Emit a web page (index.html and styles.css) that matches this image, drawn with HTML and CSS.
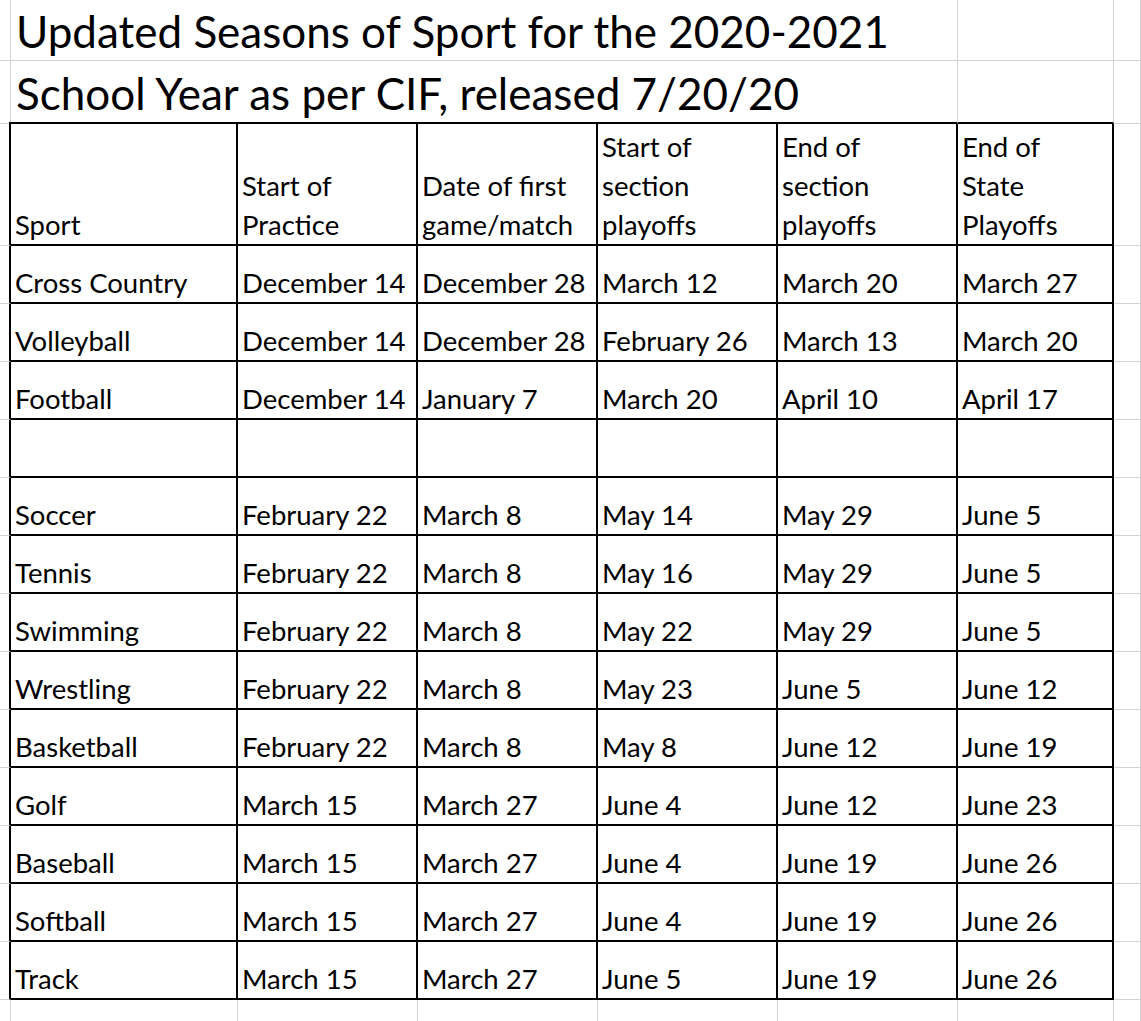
FILE: index.html
```html
<!DOCTYPE html>
<html lang="en">
<head>
<meta charset="utf-8">
<title>Updated Seasons of Sport 2020-2021</title>
<link rel="stylesheet" href="styles.css">
</head>
<body>
<div class="sheet">
  <!-- row 1 -->
  <div class="c"></div>
  <div class="c title span5">Updated Seasons of Sport for the 2020-2021</div>
  <div class="c"></div>
  <div class="c"></div>
  <!-- row 2 -->
  <div class="c corner"></div>
  <div class="c title span5 top">School Year as per CIF, released 7/20/20</div>
  <div class="c top"></div>
  <div class="c"></div>
  <!-- header -->
  <div class="c edge"></div>
  <div class="c t">Sport</div>
  <div class="c t">Start of<br>Practice</div>
  <div class="c t">Date of first<br>game/match</div>
  <div class="c t">Start of<br>section<br>playoffs</div>
  <div class="c t">End of<br>section<br>playoffs</div>
  <div class="c t">End of<br>State<br>Playoffs</div>
  <div class="c"></div>
  <!-- data -->
  <div class="c edge"></div>
  <div class="c t">Cross Country</div><div class="c t">December 14</div><div class="c t">December 28</div><div class="c t">March 12</div><div class="c t">March 20</div><div class="c t">March 27</div>
  <div class="c"></div>
  <div class="c edge"></div>
  <div class="c t">Volleyball</div><div class="c t">December 14</div><div class="c t">December 28</div><div class="c t">February 26</div><div class="c t">March 13</div><div class="c t">March 20</div>
  <div class="c"></div>
  <div class="c edge"></div>
  <div class="c t">Football</div><div class="c t">December 14</div><div class="c t">January 7</div><div class="c t">March 20</div><div class="c t">April 10</div><div class="c t">April 17</div>
  <div class="c"></div>
  <div class="c edge"></div>
  <div class="c t"></div><div class="c t"></div><div class="c t"></div><div class="c t"></div><div class="c t"></div><div class="c t"></div>
  <div class="c"></div>
  <div class="c edge"></div>
  <div class="c t">Soccer</div><div class="c t">February 22</div><div class="c t">March 8</div><div class="c t">May 14</div><div class="c t">May 29</div><div class="c t">June 5</div>
  <div class="c"></div>
  <div class="c edge"></div>
  <div class="c t">Tennis</div><div class="c t">February 22</div><div class="c t">March 8</div><div class="c t">May 16</div><div class="c t">May 29</div><div class="c t">June 5</div>
  <div class="c"></div>
  <div class="c edge"></div>
  <div class="c t">Swimming</div><div class="c t">February 22</div><div class="c t">March 8</div><div class="c t">May 22</div><div class="c t">May 29</div><div class="c t">June 5</div>
  <div class="c"></div>
  <div class="c edge"></div>
  <div class="c t">Wrestling</div><div class="c t">February 22</div><div class="c t">March 8</div><div class="c t">May 23</div><div class="c t">June 5</div><div class="c t">June 12</div>
  <div class="c"></div>
  <div class="c edge"></div>
  <div class="c t">Basketball</div><div class="c t">February 22</div><div class="c t">March 8</div><div class="c t">May 8</div><div class="c t">June 12</div><div class="c t">June 19</div>
  <div class="c"></div>
  <div class="c edge"></div>
  <div class="c t">Golf</div><div class="c t">March 15</div><div class="c t">March 27</div><div class="c t">June 4</div><div class="c t">June 12</div><div class="c t">June 23</div>
  <div class="c"></div>
  <div class="c edge"></div>
  <div class="c t">Baseball</div><div class="c t">March 15</div><div class="c t">March 27</div><div class="c t">June 4</div><div class="c t">June 19</div><div class="c t">June 26</div>
  <div class="c"></div>
  <div class="c edge"></div>
  <div class="c t">Softball</div><div class="c t">March 15</div><div class="c t">March 27</div><div class="c t">June 4</div><div class="c t">June 19</div><div class="c t">June 26</div>
  <div class="c"></div>
  <div class="c edge"></div>
  <div class="c t">Track</div><div class="c t">March 15</div><div class="c t">March 27</div><div class="c t">June 5</div><div class="c t">June 19</div><div class="c t">June 26</div>
  <div class="c"></div>
  <!-- trailing row -->
  <div class="c"></div><div class="c"></div><div class="c"></div><div class="c"></div><div class="c"></div><div class="c"></div><div class="c"></div><div class="c"></div>
</div>
</body>
</html>
```
FILE: styles.css
```css
html, body {
  margin: 0;
  padding: 0;
  background: #ffffff;
}

body {
  width: 1141px;
  height: 1021px;
  overflow: hidden;
  font-family: Lato, "Liberation Sans", sans-serif;
  color: #000000;
}

.sheet {
  display: grid;
  grid-template-columns: 11px 227px 180px 180px 180px 180px 156px 1fr;
  grid-template-rows: 61px 63px 122px repeat(13, 58px) 58px;
}

.c {
  box-sizing: border-box;
  border-right: 1px solid #d4d4d4;
  border-bottom: 1px solid #d4d4d4;
  display: flex;
  align-items: flex-end;
  padding: 0 0 0 4px;
  font-size: 27.5px;
  line-height: 39px;
  white-space: nowrap;
  overflow: hidden;
  min-width: 0;
}

.title {
  font-size: 44px;
  line-height: 58px;
  padding-left: 5px;
  padding-bottom: 0;
  overflow: visible;
}

.span5 {
  grid-column: span 5;
}

.top {
  border-bottom: 2px solid #000000;
}

.t {
  border-right: 2px solid #000000;
  border-bottom: 2px solid #000000;
}

.edge {
  border-right: 2px solid #000000;
}

.corner {
  position: relative;
  overflow: visible;
}

.corner::after {
  content: "";
  position: absolute;
  right: -1px;
  bottom: -1px;
  width: 2px;
  height: 2px;
  background: #000000;
}
```
